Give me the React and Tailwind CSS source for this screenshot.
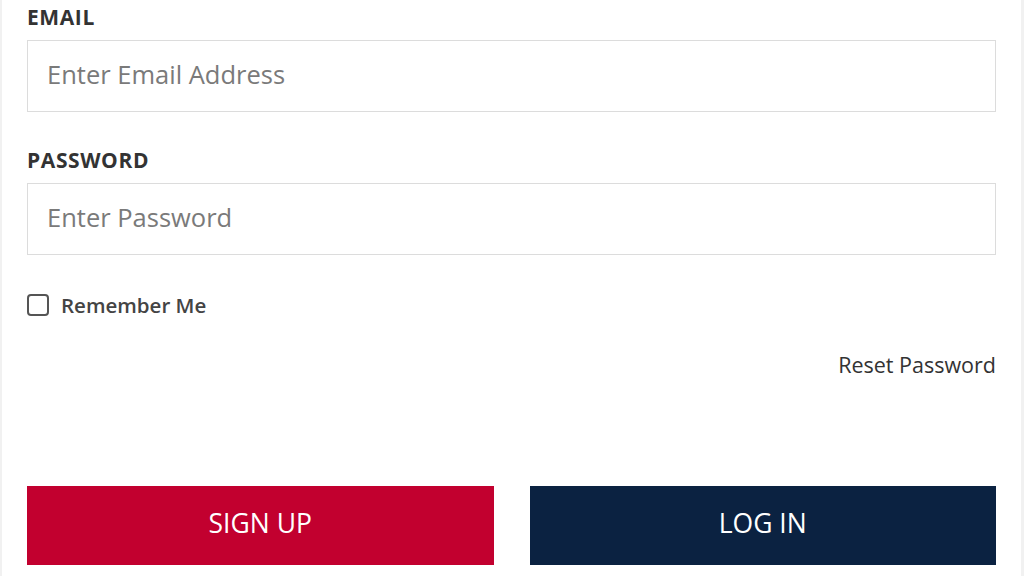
import React, { useState } from "react";

const App = () => {
  const [remember, setRemember] = useState(false);

  return (
    <div
      className="w-[1024px] h-[576px] bg-white overflow-hidden border-l-2 border-r-[3px] border-[#f1f1f1]"
      style={{ fontFamily: "'Open Sans', 'Noto Sans', sans-serif" }}
    >
      <form className="flex flex-col px-[25px] pt-[5px]">
        {/* Email */}
        <label className="text-[21px] font-bold text-[#333] leading-[24px] tracking-[0.6px]">EMAIL</label>
        <input
          type="email"
          placeholder="Enter Email Address"
          className="mt-[11px] h-[72px] w-full border border-[#dcdcdc] px-[19px] pb-[4px] text-[25.5px] text-[#333] placeholder:text-[#7a7a7a] outline-none"
        />

        {/* Password */}
        <label className="mt-[36px] text-[21px] font-bold text-[#333] leading-[24px] tracking-[0.6px]">PASSWORD</label>
        <input
          type="password"
          placeholder="Enter Password"
          className="mt-[11px] h-[72px] w-full border border-[#dcdcdc] px-[19px] pb-[4px] text-[25.5px] text-[#333] placeholder:text-[#7a7a7a] outline-none"
        />

        {/* Remember me */}
        <label className="mt-[38px] flex items-center gap-[12px] cursor-pointer">
          <span
            onClick={() => setRemember(!remember)}
            className="w-[22px] h-[22px] border-2 border-[#555] rounded-[4px] bg-white"
          />
          <span className="text-[20.5px] font-semibold text-[#444] leading-[24px]">Remember Me</span>
        </label>

        <div className="mt-[35px] flex justify-end">
          <a href="#" className="text-[21.5px] text-[#333] leading-[26px]">Reset Password</a>
        </div>

        {/* Buttons */}
        <div className="mt-[108px] grid grid-cols-2 gap-[36px]">
          <button type="button" className="h-[79px] pb-[3px] bg-[#c2002f] text-white text-[26.5px] font-medium">SIGN UP</button>
          <button type="button" className="h-[79px] pb-[3px] bg-[#0b2241] text-white text-[26.5px] font-medium">LOG IN</button>
        </div>
      </form>
    </div>
  );
};

export default App;
